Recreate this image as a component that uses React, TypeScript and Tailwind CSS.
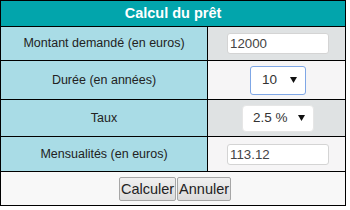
import React from "react";

const rows = [
  { label: "Montant demandé (en euros)", h: "h-[34px]", bg: "bg-[#dfe2e3]", kind: "input", value: "12000" },
  { label: "Durée (en années)", h: "h-[39px]", bg: "bg-[#f6f5f6]", kind: "select-focus", value: "10" },
  { label: "Taux", h: "h-[37px]", bg: "bg-[#dfe2e3]", kind: "select", value: "2.5 %" },
  { label: "Mensualités (en euros)", h: "h-[35px]", bg: "bg-[#f6f5f6]", kind: "input", value: "113.12" },
];

function Arrow() {
  return (
    <svg width="7" height="6" viewBox="0 0 7 6" className="pointer-events-none absolute right-[9px] top-1/2 -translate-y-1/2">
      <path d="M0 0h7L3.5 6z" fill="#111" />
    </svg>
  );
}

export default function App() {
  return (
    <div className="w-[346px] border border-black bg-[#f8f8f8] font-['Liberation_Sans',Arial,sans-serif] text-[#222]">
      {/* Header */}
      <div className="flex h-[26px] items-center justify-center border-b border-black bg-[#02a5ac] text-[14.5px] font-bold text-white">
        Calcul du prêt
      </div>

      {rows.map((row) => (
        <div key={row.label} className={`grid grid-cols-[207px_1fr] border-b border-black ${row.h}`}>
          <div className="flex items-center justify-center border-r border-black bg-[#a9dce6] text-[12.5px]">
            {row.label}
          </div>
          <div className={`flex items-center justify-center pl-[3px] ${row.bg}`}>
            {row.kind === "input" && (
              <input
                defaultValue={row.value}
                className="h-[21px] w-[102px] rounded-[3px] border border-[#d4d4d4] bg-white px-[2px] text-[13.3px] text-[#444] outline-none"
              />
            )}
            {row.kind === "select-focus" && (
              <div className="relative">
                <select
                  defaultValue={row.value}
                  className="h-[29px] w-[56px] appearance-none rounded-[3px] border border-[#7fa7e6] bg-white pl-[11px] text-[13.5px] text-[#333] outline-none"
                >
                  <option value="10">10</option>
                  <option value="15">15</option>
                  <option value="20">20</option>
                </select>
                <Arrow />
              </div>
            )}
            {row.kind === "select" && (
              <div className="relative">
                <select
                  defaultValue={row.value}
                  className="h-[27px] w-[72px] appearance-none rounded-[4px] border border-[#e6e6e6] bg-white pl-[10px] text-[13.5px] text-[#333] outline-none"
                >
                  <option value="2.5 %">2.5 %</option>
                  <option value="3 %">3 %</option>
                  <option value="3.5 %">3.5 %</option>
                </select>
                <Arrow />
              </div>
            )}
          </div>
        </div>
      ))}

      {/* Buttons */}
      <div className="flex h-[33px] items-center justify-center gap-[1px] pl-[4px] pt-[1px]">
        <button className="h-[24px] rounded-[2px] border border-[#a6a6a6] bg-gradient-to-b from-[#f0f0f0] to-[#dcdcdc] px-[1px] text-[14.5px] leading-none text-[#222]">
          Calculer
        </button>
        <button className="h-[24px] rounded-[2px] border border-[#a6a6a6] bg-gradient-to-b from-[#f0f0f0] to-[#dcdcdc] px-[1px] text-[14.5px] leading-none text-[#222]">
          Annuler
        </button>
      </div>
    </div>
  );
}
